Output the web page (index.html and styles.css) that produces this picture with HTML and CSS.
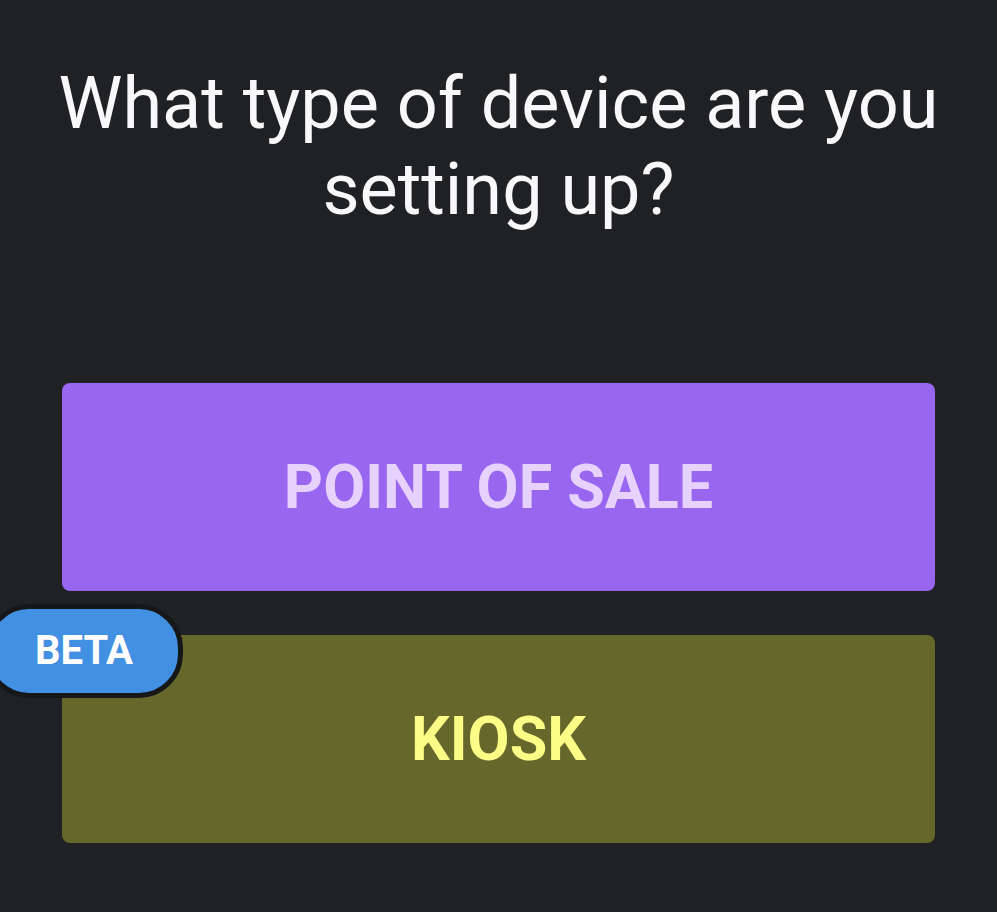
FILE: index.html
```html
<!DOCTYPE html>
<html lang="en">
<head>
  <meta charset="UTF-8">
  <meta name="viewport" content="width=device-width, initial-scale=1.0">
  <title>Device Setup</title>
  <link rel="stylesheet" href="styles.css">
</head>
<body>
  <main class="setup">
    <h1 class="setup-title">What type of device are you<br>setting up?</h1>

    <div class="device-list">
      <button class="device-button device-pos" type="button">POINT OF SALE</button>

      <button class="device-button device-kiosk" type="button">
        <span class="beta-badge">BETA</span>
        KIOSK
      </button>
    </div>
  </main>
</body>
</html>
```

FILE: styles.css
```css
/* General Styles */
body {
  font-family: 'Roboto', 'Liberation Sans', sans-serif;
  background-color: #202124;
  color: #ffffff;
  margin: 0;
  overflow: hidden;
}

.setup {
  padding: 0 62px;
}

.setup-title {
  margin: 61px -60px 0;
  font-size: 72px;
  font-weight: 400;
  line-height: 86px;
  text-align: center;
  white-space: nowrap;
  color: #f8f8fa;
}

/* Device Buttons */
.device-list {
  display: flex;
  flex-direction: column;
  gap: 44px;
  margin-top: 150px;
}

.device-button {
  position: relative;
  height: 208px;
  border: none;
  border-radius: 8px;
  font-family: inherit;
  font-size: 61px;
  font-weight: 700;
  cursor: pointer;
}

.device-pos {
  background-color: #9966ef;
  color: #e7d1fd;
}

.device-kiosk {
  background-color: #66682b;
  color: #fcfd86;
}

/* Beta Badge */
.beta-badge {
  position: absolute;
  left: -77px;
  top: -31px;
  width: 188px;
  height: 84px;
  border: 5px solid #161719;
  border-radius: 44px;
  background-color: #4290e2;
  color: #ffffff;
  font-size: 40px;
  font-weight: 700;
  line-height: 84px;
  text-align: center;
}
```
